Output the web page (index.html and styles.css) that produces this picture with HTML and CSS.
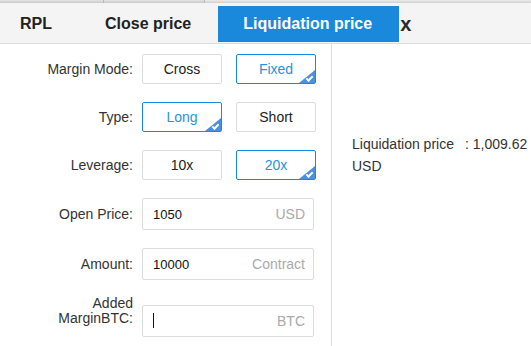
FILE: index.html
```html
<!DOCTYPE html>
<html lang="en">
<head>
    <meta charset="UTF-8">
    <meta name="viewport" content="width=device-width, initial-scale=1.0">
    <title>Calculator</title>
    <link rel="stylesheet" href="styles.css">
</head>
<body>
    <div class="top-strip">
        <span class="strip-seg seg-a"></span>
        <span class="strip-seg seg-b"></span>
        <span class="strip-seg seg-c"></span>
    </div>
    <div class="tabs">
        <div class="tab">RPL</div>
        <div class="tab">Close price</div>
        <div class="tab active">Liquidation price</div>
        <div class="close">x</div>
    </div>
    <div class="main">
        <form class="calc">
            <div class="row">
                <label class="row-label">Margin Mode:</label>
                <div class="opt">Cross</div>
                <div class="opt selected">Fixed</div>
            </div>
            <div class="row">
                <label class="row-label">Type:</label>
                <div class="opt selected">Long</div>
                <div class="opt">Short</div>
            </div>
            <div class="row">
                <label class="row-label">Leverage:</label>
                <div class="opt">10x</div>
                <div class="opt selected">20x</div>
            </div>
            <div class="row">
                <label class="row-label">Open Price:</label>
                <div class="field">
                    <input type="text" class="field-input" value="1050">
                    <span class="unit">USD</span>
                </div>
            </div>
            <div class="row">
                <label class="row-label">Amount:</label>
                <div class="field">
                    <input type="text" class="field-input" value="10000">
                    <span class="unit">Contract</span>
                </div>
            </div>
            <div class="row row-top">
                <label class="row-label two-line">Added<br>MarginBTC:</label>
                <div class="field field-offset">
                    <span class="caret"></span>
                    <input type="text" class="field-input" value="">
                    <span class="unit">BTC</span>
                </div>
            </div>
        </form>
        <div class="result">
            <div class="result-line"><span class="result-label">Liquidation price</span><span class="result-value">: 1,009.62</span></div>
            <div class="result-line">USD</div>
        </div>
    </div>
</body>
</html>
```

FILE: styles.css
```css
body {
    font-family: "Liberation Sans", Arial, sans-serif;
    font-size: 14px;
    color: #333;
    background: #fff;
    margin: 0;
    overflow: hidden;
}
.top-strip {
    height: 3px;
    display: flex;
    background: linear-gradient(to bottom, #e4e4e4, #c8c8c8);
}
.strip-seg {
    display: block;
    height: 3px;
    border-right: 1px solid #b9b9b9;
}
.seg-a {
    width: 103px;
}
.seg-b {
    width: 100px;
}
.seg-c {
    flex: 1;
    border-right: none;
    background: linear-gradient(to bottom, #ececec, #cfcfcf);
}
.tabs {
    display: flex;
    align-items: flex-start;
    height: 40px;
    background: #f4f4f4;
    border-bottom: 1px solid #dcdcdc;
}
.tab {
    font-weight: bold;
    font-size: 16px;
    color: #222;
    height: 36px;
    line-height: 36px;
    margin-top: 3px;
    padding: 0 27px 0 25px;
}
.tab:first-child {
    padding-left: 20px;
    padding-right: 28px;
}
.tab.active {
    background: #1a88db;
    color: #fff;
}
.close {
    font-weight: bold;
    font-size: 20px;
    color: #2a2a2a;
    margin-top: 3px;
    height: 36px;
    line-height: 36px;
    margin-left: 1px;
}
.main {
    display: flex;
    height: 302px;
}
.calc {
    width: 332px;
    border-right: 1px solid #dcdcdc;
    padding-top: 10px;
    box-sizing: border-box;
    margin: 0;
}
.row {
    display: flex;
    align-items: center;
    margin-bottom: 18px;
}
.row-top {
    align-items: flex-start;
}
.row-label {
    width: 133px;
    margin-right: 9px;
    text-align: right;
    color: #333;
}
.two-line {
    line-height: 15px;
    margin-top: -2px;
}
.opt {
    position: relative;
    width: 80px;
    height: 30px;
    line-height: 28px;
    box-sizing: border-box;
    border: 1px solid #dcdcdc;
    border-radius: 2px;
    text-align: center;
    color: #222;
    margin-right: 14px;
}
.opt.selected {
    border-color: #1a8ae0;
    color: #2792e0;
}
.opt.selected::before {
    content: "";
    position: absolute;
    right: 0;
    bottom: 0;
    width: 0;
    height: 0;
    border-style: solid;
    border-width: 0 0 13px 16px;
    border-color: transparent transparent #4a8fe0 transparent;
}
.opt.selected::after {
    content: "";
    position: absolute;
    right: 2px;
    bottom: 3px;
    width: 5px;
    height: 2px;
    border-left: 2px solid #fff;
    border-bottom: 2px solid #fff;
    transform: rotate(-45deg);
}
.field {
    position: relative;
    display: flex;
    align-items: center;
    width: 172px;
    height: 32px;
    box-sizing: border-box;
    border: 1px solid #dcdcdc;
    border-radius: 2px;
    padding: 0 8px 0 10px;
}
.field-offset {
    margin-top: 7px;
}
.field-input {
    flex: 1;
    min-width: 0;
    border: none;
    outline: none;
    padding: 0;
    font-family: "Liberation Sans", Arial, sans-serif;
    font-size: 13px;
    color: #111;
    background: transparent;
}
.unit {
    color: #aaa;
    font-size: 14px;
}
.caret {
    position: absolute;
    left: 10px;
    top: 7px;
    width: 1px;
    height: 15px;
    background: #111;
}
.result {
    flex: 1;
    padding: 89px 0 0 20px;
    line-height: 22px;
    color: #333;
}
.result-line {
    white-space: nowrap;
}
.result-label {
    padding-right: 11px;
}
```
